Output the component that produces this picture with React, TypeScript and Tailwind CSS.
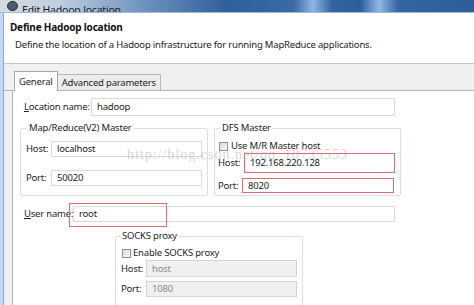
import React from 'react';

const Input: React.FC<{ value?: string; className?: string; disabled?: boolean }> = ({ value, className = '', disabled }) => (
  <div
    className={`flex items-center border px-[5px] whitespace-nowrap ${disabled ? 'bg-[#f0f0f0] text-[#8a8a8a] border-[#d4d4d4]' : 'bg-white text-[#1a1a1a] border-[#d6d9de]'} ${className}`}
  >
    {value}
  </div>
);

const Check: React.FC = () => (
  <span className="w-[9px] h-[9px] border border-[#8e8f8f] bg-gradient-to-br from-[#dcdcdc] to-[#f6f6f6] shrink-0" />
);

const App: React.FC = () => {
  return (
    <div
      className="w-[474px] h-[305px] overflow-hidden bg-[#f0f0f0] flex flex-col text-[9.5px] leading-[12px] tracking-[-0.2px] text-[#1e1e1e] relative whitespace-nowrap"
      style={{ fontFamily: '"Noto Sans", "Open Sans", sans-serif' }}
    >
      {/* window title bar, mostly cut off */}
      <div className="h-[13px] shrink-0 overflow-hidden flex items-end border-b border-[#9fbadb] bg-[linear-gradient(90deg,#d4dbe4_0%,#c2cfdf_12%,#6f93c0_30%,#2f5f9c_48%,#3a6aa6_62%,#8db6e2_66%,#3464a0_70%,#2e5e9a_76%,#8fb8e4_80%,#3565a2_84%,#2d5d99_100%)]">
        <span className="ml-[7px] mb-[1px] w-[11px] h-[10px] rounded-full bg-[#4d5a6a] border border-[#2b3440] shrink-0" />
        <span className="ml-[4px] -mb-[4px] text-[10.5px] leading-[12px] text-[#1c1c1c]">Edit Hadoop location...</span>
      </div>

      <div className="flex flex-1 min-h-0">
        {/* left window frame */}
        <div className="w-[4px] bg-[#c3d8f2] border-r border-[#8aa9d2] shrink-0" />

        <div className="flex-1 flex flex-col min-w-0">
          {/* header */}
          <div className="h-[51px] bg-white border-b border-[#c8c8c8] pl-[6px] pt-[8px] shrink-0">
            <div className="font-bold text-[10px] leading-[12px] text-[#111]">Define Hadoop location</div>
            <div className="mt-[6px] ml-[5px] leading-[12px] text-[#222]">
              Define the location of a Hadoop infrastructure for running MapReduce applications.
            </div>
          </div>

          {/* tabs */}
          <div className="flex items-end pl-[10px] pt-[7px] h-[27px] shrink-0 border-b border-[#b4b4b4]">
            <div className="h-[20px] -mb-px bg-white border border-b-0 border-[#a8a8a8] px-[4px] flex items-center z-10">General</div>
            <div className="h-[16px] bg-[#ececec] border border-b-0 border-l-0 border-[#b8b8b8] px-[4px] flex items-center">Advanced parameters</div>
          </div>

          {/* tab panel */}
          <div className="flex-1 ml-[8px] bg-white border-l border-[#b4b4b4] pl-[7px] pt-[7px] relative">
            {/* location name */}
            <div className="flex items-center h-[18px] ml-[4px]">
              <span className="w-[67px] shrink-0"><u>L</u>ocation name:</span>
              <Input value="hadoop" className="w-[304px] h-[18px]" />
            </div>

            <div className="flex mt-[6px] gap-[6px]">
              <fieldset className="w-[186px] h-[74px] border border-[#d5dfe5] rounded-[2px] px-[5px]">
                <legend className="px-[2px] ml-[1px] leading-[12px]">Map/Reduce(V2) Master</legend>
                <div className="flex items-center mt-[7px] h-[16px]">
                  <span className="w-[25px] shrink-0">Host:</span>
                  <Input value="localhost" className="w-[151px] h-[16px]" />
                </div>
                <div className="flex items-center mt-[13px] h-[16px]">
                  <span className="w-[25px] shrink-0">Port:</span>
                  <Input value="50020" className="w-[151px] h-[16px]" />
                </div>
              </fieldset>

              <fieldset className="w-[187px] h-[74px] border border-[#d5dfe5] rounded-[2px] pl-[3px]">
                <legend className="px-[2px] ml-[2px] leading-[12px]">DFS Master</legend>
                <div className="flex items-center gap-[3px] mt-[6px] h-[12px] ml-[1px]">
                  <Check />
                  <span>Use M/R Master host</span>
                </div>
                <div className="flex items-center mt-[1px] h-[20px]">
                  <span className="w-[26px] shrink-0">Host:</span>
                  <Input value="192.168.220.128" className="w-[151px] h-[20px] !border-[#e06a72] !border-[1.5px]" />
                </div>
                <div className="flex items-center mt-[5px] h-[15px]">
                  <span className="w-[24px] shrink-0">Port:</span>
                  <Input value="8020" className="w-[152px] h-[15px] !border-[#e06a72] !border-[1.5px]" />
                </div>
              </fieldset>
            </div>

            {/* user name */}
            <div className="flex items-center h-[16px] mt-[10px] ml-[4px]">
              <span className="w-[49px] shrink-0"><u>U</u>ser name:</span>
              <div className="relative">
                <Input value="root" className="w-[322px] h-[16px]" />
                <div className="absolute -left-[4px] -top-[3px] w-[98px] h-[24px] border-[1.5px] border-[#e06a72]" />
              </div>
            </div>

            {/* socks proxy */}
            <fieldset className="w-[188px] h-[90px] ml-[95px] mt-[8px] border border-[#d5dfe5] rounded-[2px] pl-[5px]">
              <legend className="px-[1px] leading-[12px]">SOCKS proxy</legend>
              <div className="flex items-center gap-[2px] mt-[5px] h-[12px] ml-[1px]">
                <Check />
                <span>Enable SOCKS proxy</span>
              </div>
              <div className="flex items-center mt-[1px] h-[17px]">
                <span className="w-[25px] shrink-0">Host:</span>
                <Input value="host" disabled className="w-[151px] h-[17px]" />
              </div>
              <div className="flex items-center mt-[4px] h-[16px]">
                <span className="w-[25px] shrink-0">Port:</span>
                <Input value="1080" disabled className="w-[151px] h-[16px]" />
              </div>
            </fieldset>
          </div>
        </div>
      </div>

      {/* blog watermark */}
      <div
        className="absolute left-[127px] top-[147px] text-[14px] leading-[16px] tracking-[1px] text-[#9a9a9a] opacity-40 pointer-events-none"
        style={{ fontFamily: '"Liberation Serif", serif' }}
      >
        http://blog.csdn.net/qq_18735553
      </div>
    </div>
  );
};

export default App;
